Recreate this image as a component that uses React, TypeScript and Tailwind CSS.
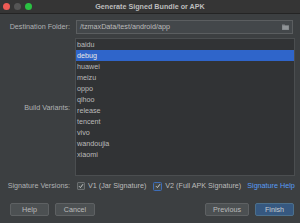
import React from "react";

const variants = ["baidu", "debug", "huawei", "meizu", "oppo", "qihoo", "release", "tencent", "vivo", "wandoujia", "xiaomi"];

function Check() {
  return (
    <svg width="6" height="6" viewBox="0 0 6 6" className="block">
      <path d="M1 3.2 L2.4 4.6 L5 1.2" fill="none" stroke="#c8c8c8" strokeWidth="1" />
    </svg>
  );
}

export default function App() {
  const font = { fontFamily: '"Liberation Sans", Arial, sans-serif' };
  return (
    <div className="w-[300px] h-[223px] bg-[#3c3f41] flex flex-col overflow-hidden text-[7.2px] leading-none text-[#bbbbbb]" style={font}>
      <div className="relative h-[14px] bg-[#353535] border-b border-[#242424] flex items-center justify-center shrink-0">
        <div className="absolute left-[3px] top-[3px] flex gap-[4px]">
          <div className="w-[7px] h-[7px] rounded-full bg-[#ee5b55]" />
          <div className="w-[7px] h-[7px] rounded-full bg-[#555555]" />
          <div className="w-[7px] h-[7px] rounded-full bg-[#2ac142]" />
        </div>
        <span className="font-bold text-[#bdbdbd] text-[7.2px]">Generate Signed Bundle or APK</span>
      </div>

      <div className="flex mt-[6px] h-[14px] items-center">
        <div className="w-[70px] text-right text-[#b0b2b4]">Destination Folder:</div>
        <div className="ml-[6px] w-[217px] h-[14px] bg-[#43474a] border border-[#5b5e60] flex items-center pl-[3px] pr-[3px]">
          <span className="flex-1">/tzmaxData/test/android/app</span>
          <svg width="7" height="6" viewBox="0 0 7 6" className="block">
            <path d="M0 0.5 H2.6 L3.3 1.3 H7 V6 H0 Z" fill="#7e8285" />
            <rect x="0.6" y="2" width="5.8" height="3.4" fill="#8f9396" />
          </svg>
        </div>
      </div>

      <div className="flex mt-[4px] h-[138px] items-center">
        <div className="w-[70px] text-right text-[#b0b2b4] pt-[1px]">Build Variants:</div>
        <div className="ml-[5px] w-[220px] h-[138px] bg-[#313335] border border-[#4b4e50] flex flex-col">
          {variants.map((v) => (
            <div
              key={v}
              className={
                v === "debug"
                  ? "h-[11px] flex items-center pl-[1px] bg-[#2f65ca] text-[#e8e8e8]"
                  : "h-[11px] flex items-center pl-[1px]"
              }
            >
              {v}
            </div>
          ))}
        </div>
      </div>

      <div className="flex mt-[4px] h-[12px] items-center">
        <div className="w-[70px] text-right text-[#b0b2b4]">Signature Versions:</div>
        <div className="ml-[7px] w-[8px] h-[8px] bg-[#43494a] border border-[#6b6e70] rounded-[1px] flex items-center justify-center">
          <Check />
        </div>
        <span className="ml-[3px]">V1 (Jar Signature)</span>
        <div className="ml-[7px] w-[9px] h-[9px] bg-[#43494a] border-[1.5px] border-[#3d6db8] rounded-[1.5px] flex items-center justify-center">
          <Check />
        </div>
        <span className="ml-[3px]">V2 (Full APK Signature)</span>
        <span className="ml-[6px] text-[#589df6]">Signature Help</span>
      </div>

      <div className="flex mt-[11px] h-[13px] px-[10px] pr-[6px] justify-between">
        <div className="flex gap-[6px]">
          <div className="w-[39px] h-[13px] bg-[#4c5052] border border-[#5e6163] rounded-[2px] flex items-center justify-center">Help</div>
          <div className="w-[40px] h-[13px] bg-[#4c5052] border border-[#5e6163] rounded-[2px] flex items-center justify-center">Cancel</div>
        </div>
        <div className="flex gap-[6px]">
          <div className="w-[44px] h-[13px] bg-[#4c5052] border border-[#5e6163] rounded-[2px] flex items-center justify-center">Previous</div>
          <div className="w-[39px] h-[13px] bg-[#365880] border border-[#4c708c] rounded-[2px] flex items-center justify-center text-[#c8ccd0]">Finish</div>
        </div>
      </div>
    </div>
  );
}
